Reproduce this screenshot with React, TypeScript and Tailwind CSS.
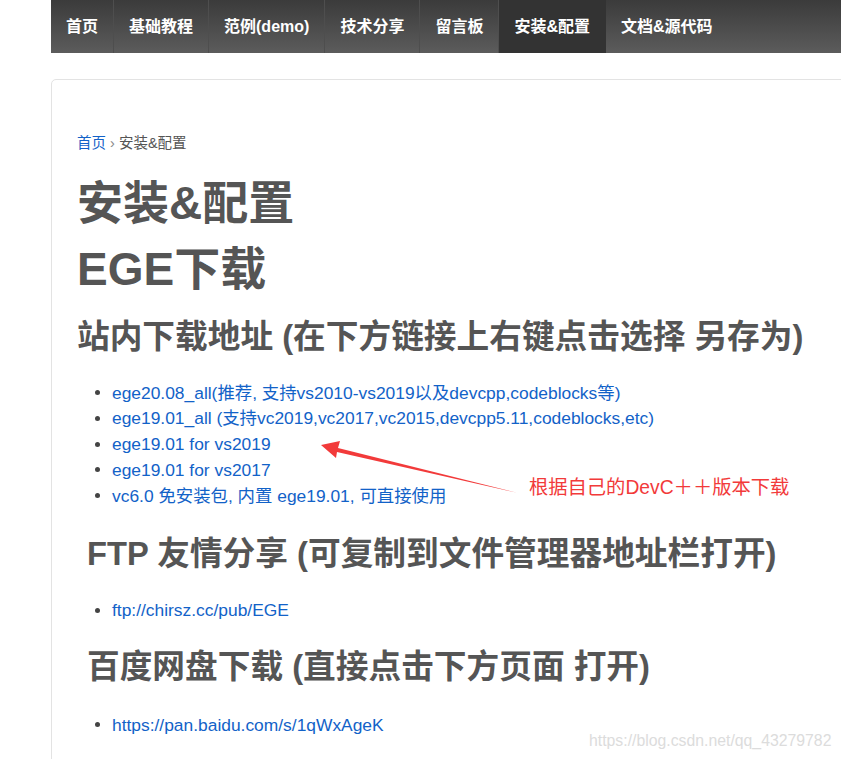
const navItems = ["首页", "基础教程", "范例(demo)", "技术分享", "留言板", "安装&配置", "文档&源代码"];

const downloads = [
  "ege20.08_all(推荐, 支持vs2010-vs2019以及devcpp,codeblocks等)",
  "ege19.01_all (支持vc2019,vc2017,vc2015,devcpp5.11,codeblocks,etc)",
  "ege19.01 for vs2019",
  "ege19.01 for vs2017",
  "vc6.0 免安装包, 内置 ege19.01, 可直接使用",
];

function LinkItem({ text }: { text: string }) {
  return (
    <li className="flex items-center h-[25.7px]">
      <span className="w-[35px] flex justify-center pl-[5px]">
        <span className="w-[5px] h-[5px] rounded-full bg-[#444]" />
      </span>
      <a className="text-[#1262c8] text-[17.4px] whitespace-nowrap">{text}</a>
    </li>
  );
}

export default function App() {
  return (
    <div
      className="relative w-[841px] h-[759px] overflow-hidden bg-white"
      style={{ fontFamily: '"Liberation Sans", Arial, "Noto Sans CJK SC", sans-serif' }}
    >
      {/* top nav */}
      <nav className="ml-[51px] h-[53px] flex bg-gradient-to-b from-[#3b3b3b] to-[#5c5c5c]">
        {navItems.map((item, i) => (
          <div
            key={item}
            className={
              "h-full flex items-center px-[15px] text-white font-bold text-[16px] whitespace-nowrap " +
              (i < navItems.length - 2 ? "border-r border-[#4e4e4e] " : "") +
              (item === "安装&配置" ? "bg-[#333] pr-[16px]" : "")
            }
          >
            {item}
          </div>
        ))}
      </nav>

      {/* content card */}
      <div className="mt-[26px] ml-[51px] w-[820px] h-[700px] border border-[#e3e3e3] rounded-[5px] pl-[25px] pt-[52px] text-[#555]">
        <div className="text-[14.5px] leading-[22px] whitespace-nowrap">
          <a className="text-[#1262c8]">首页</a>
          <span className="text-[#888]"> › </span>
          <span>安装&amp;配置</span>
        </div>

        <h1 className="mt-[16px] text-[46px] leading-[66px] font-bold whitespace-nowrap">安装&amp;配置</h1>
        <h1 className="text-[46px] leading-[66px] font-bold whitespace-nowrap">EGE下载</h1>

        <h2 className="mt-[11px] text-[32.7px] leading-[48px] font-bold whitespace-nowrap">
          站内下载地址 (在下方链接上右键点击选择 另存为)
        </h2>
        <ul className="mt-[19px]">
          {downloads.map((d) => (
            <LinkItem key={d} text={d} />
          ))}
        </ul>

        <h3 className="mt-[22px] pl-[10px] text-[32.7px] leading-[48px] font-bold whitespace-nowrap">
          FTP 友情分享 (可复制到文件管理器地址栏打开)
        </h3>
        <ul className="mt-[19px]">
          <LinkItem text="ftp://chirsz.cc/pub/EGE" />
        </ul>

        <h3 className="mt-[20px] pl-[10px] text-[32.7px] leading-[48px] font-bold whitespace-nowrap">
          百度网盘下载 (直接点击下方页面 打开)
        </h3>
        <ul className="mt-[21px]">
          <LinkItem text="https://pan.baidu.com/s/1qWxAgeK" />
        </ul>
      </div>

      {/* annotation overlay */}
      <svg className="absolute left-0 top-0 pointer-events-none" width="841" height="759">
        <polygon
          points="321,445 340,441 338,448 518,493 337,452 336,458"
          fill="#f23a3a"
        />
      </svg>
      <div className="absolute left-[529px] top-[476px] text-[19.3px] leading-[24px] text-[#f23a3a] whitespace-nowrap">
        根据自己的DevC＋＋版本下载
      </div>

      {/* watermark */}
      <div className="absolute left-[589px] top-[730px] text-[15.8px] leading-[22px] text-[#dcdcdc] whitespace-nowrap">
        https://blog.csdn.net/qq_43279782
      </div>
    </div>
  );
}
